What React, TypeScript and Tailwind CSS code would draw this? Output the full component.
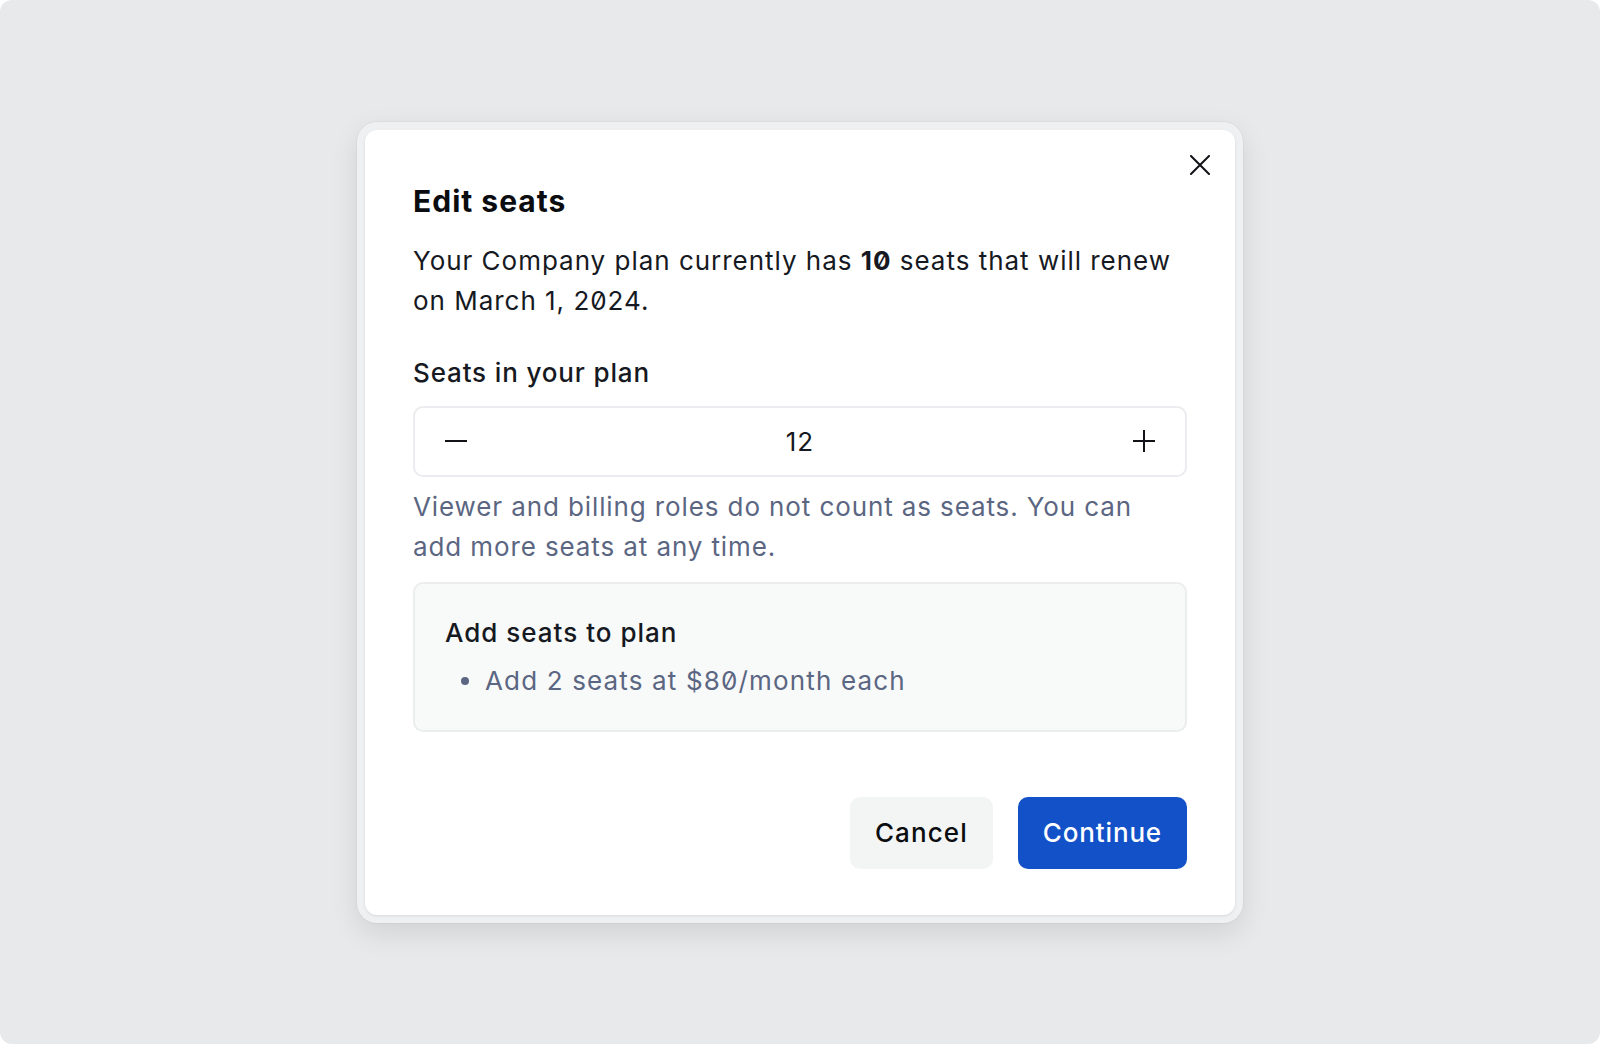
import React from "react";

function CloseIcon() {
  return (
    <svg width="20" height="20" viewBox="0 0 20 20" fill="none" stroke="#111318" strokeWidth="2" strokeLinecap="square">
      <path d="M1 1 L19 19 M19 1 L1 19" />
    </svg>
  );
}

function MinusIcon() {
  return (
    <svg width="22" height="22" viewBox="0 0 22 22" fill="none" stroke="#111318" strokeWidth="2">
      <path d="M0 11 H22" />
    </svg>
  );
}

function PlusIcon() {
  return (
    <svg width="22" height="22" viewBox="0 0 22 22" fill="none" stroke="#111318" strokeWidth="2">
      <path d="M0 11 H22 M11 0 V22" />
    </svg>
  );
}

export default function App() {
  return (
    <div className="min-h-screen bg-white [font-family:Inter,'Noto_Sans',sans-serif] [font-feature-settings:'zero']">
      <div className="flex h-[1044px] w-[1600px] items-center justify-center rounded-[12px] bg-[#e8e9eb]">
        <div className="rounded-[20px] bg-[#eff0f1] p-[8px] shadow-[0_10px_28px_rgba(0,0,0,0.10),0_0_0_1px_rgba(0,0,0,0.03)]">
          <div className="relative w-[870px] rounded-[12px] bg-white px-[48px] pb-[46px] pt-[47px] shadow-[0_1px_3px_rgba(0,0,0,0.10)]">
            <button className="absolute right-[25px] top-[25px] flex h-[20px] w-[20px] items-center justify-center">
              <CloseIcon />
            </button>

            <h2 className="text-[30px] font-bold leading-[48px] tracking-[1px] text-[#0b0c0f]">Edit seats</h2>
            <p className="-mr-[16px] mt-[16px] text-[26px] leading-[40px] tracking-[0.98px] text-[#161922]">
              Your Company plan currently has <span className="font-bold">10</span> seats that will renew
              <br />
              on March 1, 2024.
            </p>

            <div className="mt-[32px] text-[26px] font-medium leading-[40px] tracking-[0.85px] text-[#161922]">
              Seats in your plan
            </div>
            <div className="mt-[13px] flex h-[71px] items-center justify-between rounded-[10px] border-2 border-[#ebecef] px-[30px]">
              <button className="flex items-center">
                <MinusIcon />
              </button>
              <span className="text-[26px] tracking-[1px] text-[#161922]">12</span>
              <button className="flex items-center">
                <PlusIcon />
              </button>
            </div>
            <p className="mt-[10px] text-[26px] leading-[40px] tracking-[0.89px] text-[#5b6682]">
              Viewer and billing roles do not count as seats. You can add more seats at any time.
            </p>

            <div className="mt-[15px] rounded-[10px] border-2 border-[#ebedef] bg-[#f8f9f9] px-[30px] py-[29px]">
              <div className="text-[26px] font-medium leading-[40px] tracking-[1px] text-[#161922]">Add seats to plan</div>
              <ul className="mt-[8px] pl-[16px]">
                <li className="flex items-center text-[26px] leading-[40px] tracking-[1.15px] text-[#5b6682]">
                  <span className="mr-[16px] h-[8px] w-[8px] rounded-full bg-[#5b6682]" />
                  Add 2 seats at $80/month each
                </li>
              </ul>
            </div>

            <div className="mt-[65px] flex justify-end gap-[25px]">
              <button className="h-[72px] rounded-[10px] bg-[#f3f4f4] px-[25px] text-[26px] font-medium tracking-[1.1px] text-[#0b0c0f]">
                Cancel
              </button>
              <button className="h-[72px] rounded-[10px] bg-[#1351c9] px-[25px] text-[26px] font-medium tracking-[0.85px] text-white">
                Continue
              </button>
            </div>
          </div>
        </div>
      </div>
    </div>
  );
}
